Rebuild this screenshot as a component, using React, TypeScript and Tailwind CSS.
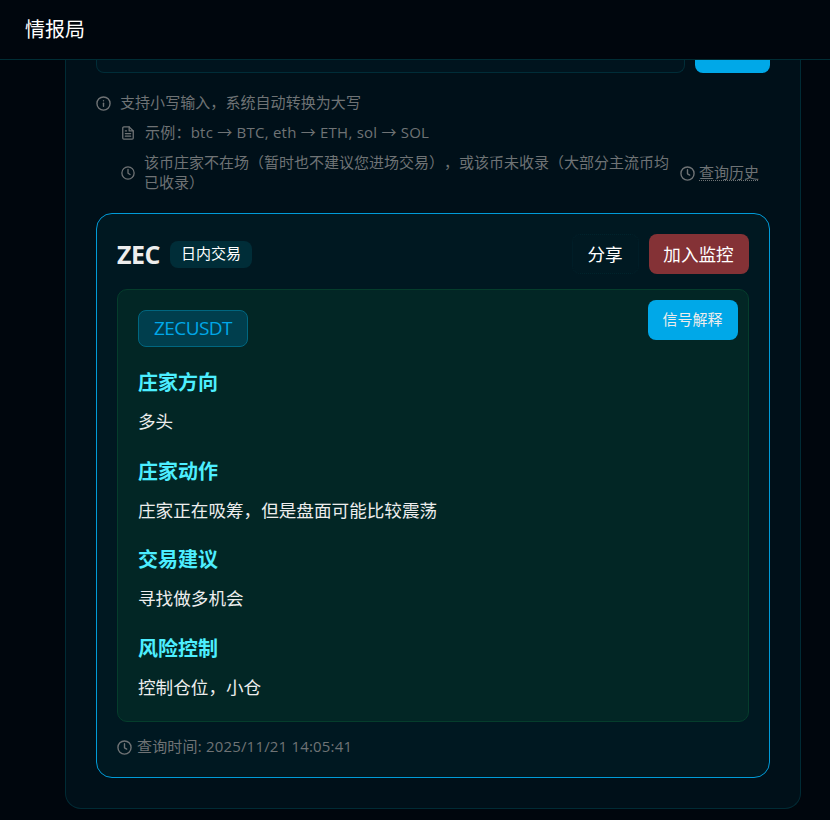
import React from "react";

interface Section {
  title: string;
  content: string;
}

const sections: Section[] = [
  { title: "庄家方向", content: "多头" },
  { title: "庄家动作", content: "庄家正在吸筹，但是盘面可能比较震荡" },
  { title: "交易建议", content: "寻找做多机会" },
  { title: "风险控制", content: "控制仓位，小仓" },
];

interface IconProps {
  className?: string;
}

function ClockIcon({ className }: IconProps) {
  return (
    <svg className={className} viewBox="0 0 24 24" fill="none" stroke="currentColor" strokeWidth="2.2" strokeLinecap="round" strokeLinejoin="round">
      <circle cx="12" cy="12" r="10.5" />
      <path d="M12 6v6.500l3.500 2" />
    </svg>
  );
}

function InfoIcon({ className }: IconProps) {
  return (
    <svg className={className} viewBox="0 0 24 24" fill="none" stroke="currentColor" strokeWidth="2.2" strokeLinecap="round">
      <circle cx="12" cy="12" r="10.5" />
      <path d="M12 11.500v5" />
      <path d="M12 7.500h.01" />
    </svg>
  );
}

function DocIcon({ className }: IconProps) {
  return (
    <svg className={className} viewBox="0 0 24 24" fill="none" stroke="currentColor" strokeWidth="2.2" strokeLinecap="round" strokeLinejoin="round">
      <path d="M14 1.500H5a2 2 0 0 0-2 2v17a2 2 0 0 0 2 2h14a2 2 0 0 0 2-2V8.500z" />
      <path d="M14 1.500v7h7" />
      <path d="M16.500 13h-9" />
      <path d="M16.500 17.500h-9" />
      <path d="M9.500 8.500h-2" />
    </svg>
  );
}

export default function App() {
  return (
    <div className="h-[820px] w-[830px] overflow-hidden bg-[#00060d] font-['Open_Sans','Noto_Sans_CJK_SC',sans-serif] text-[#ededed] [text-spacing-trim:space-all]">
      <header className="flex h-[60px] items-center border-b border-[#002d35] pl-[25px]">
        <h1 className="pt-px text-[20px] leading-[30px] text-white">情报局</h1>
      </header>

      <main className="ml-[65px] w-[736px] rounded-b-2xl border-x border-b border-[#002b35] bg-[#001019] px-[30px] pb-[30px]">
        {/* Search bar, scrolled under the header */}
        <div className="flex h-[13px] gap-[10px]">
          <div className="flex-1 rounded-b-lg border-x border-b border-[#002d38] bg-[#00141e]" />
          <div className="w-[75px] rounded-b-lg bg-[#00a8e8]" />
        </div>

        <div className="mt-5 flex flex-col gap-[10px] text-[15px] leading-5 text-[#6f7375]">
          <div className="flex items-center">
            <InfoIcon className="size-[15px]" />
            <span className="relative -top-px ml-[9px] tracking-[0.060px]">支持小写输入，系统自动转换为大写</span>
          </div>
          <div className="flex items-center pl-[25px]">
            <DocIcon className="size-[14px]" />
            <span className="relative -top-px ml-[10px] whitespace-nowrap tracking-[0.230px]">示例：btc → BTC, eth → ETH, sol → SOL</span>
          </div>
          <div className="flex items-center pl-[25px]">
            <ClockIcon className="size-[14px] shrink-0" />
            <p className="relative -top-px ml-[9px] w-[526px] shrink-0 whitespace-nowrap">
              该币庄家不在场（暂时也不建议您进场交易），或该币未收录（大部分主流币均
              <br />
              已收录）
            </p>
            <a className="ml-[10px] flex items-center gap-1">
              <ClockIcon className="size-[15px]" />
              <span className="relative -top-px whitespace-nowrap underline decoration-dotted decoration-1 underline-offset-2">查询历史</span>
            </a>
          </div>
        </div>

        <section className="mt-5 rounded-2xl border border-[#009bd8] bg-[#001821] p-5">
          <div className="flex h-10 items-center">
            <h2 className="w-[43px] text-[25px] font-bold leading-9 tracking-[-0.500px]">ZEC</h2>
            <span className="ml-[10px] flex h-[27px] w-[82px] items-center justify-center rounded-lg bg-[#002d38] pb-[2px] text-[15px] text-white">
              日内交易
            </span>
            <button className="ml-auto h-10 w-[67px] rounded-lg border border-dotted border-[#00232c] bg-[#001922] pr-px text-[17.600px] text-white">
              分享
            </button>
            <button className="ml-[10px] h-10 w-[100px] rounded-lg bg-[#843236] pr-px text-[17.600px] text-white">
              加入监控
            </button>
          </div>

          <div className="relative mt-[15px] h-[433px] rounded-[10px] border border-[#053d2c] bg-[#022625] p-5">
            <button className="absolute right-[10px] top-[10px] h-10 w-[90px] rounded-lg bg-[#00a8e8] pb-[2px] pr-px text-[15px]">
              信号解释
            </button>
            <div className="flex h-[37px] w-[110px] items-center justify-center rounded-lg border border-[#006680] bg-[#003e4d] text-[19px] tracking-[-0.550px] text-[#00a8e8]">
              ZECUSDT
            </div>
            <div className="mt-5 flex flex-col gap-5">
              {sections.map((item) => (
                <div key={item.title}>
                  <h3 className="relative top-px text-[20px] font-bold leading-[30px] text-[#4deeff]">{item.title}</h3>
                  <p className="mt-[10px] text-[17.600px] leading-[28.600px]">{item.content}</p>
                </div>
              ))}
            </div>
          </div>

          <div className="mt-[15px] flex h-5 items-center gap-[5px] text-[15px] text-[#6f7375]">
            <ClockIcon className="size-[15px]" />
            <span className="relative -top-px tracking-[0.180px]">查询时间: 2025/11/21 14:05:41</span>
          </div>
        </section>
      </main>
    </div>
  );
}
